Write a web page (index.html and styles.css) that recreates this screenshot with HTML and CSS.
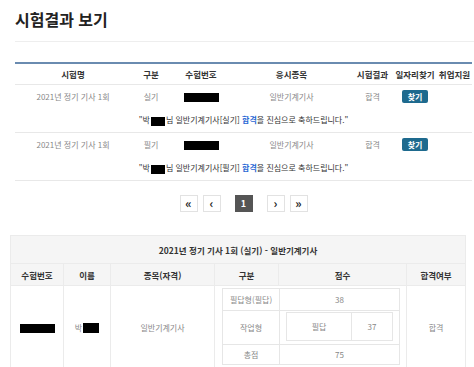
FILE: index.html
```html
<!DOCTYPE html>
<html lang="ko">
<head>
    <meta charset="UTF-8">
    <meta name="viewport" content="width=device-width, initial-scale=1.0">
    <title>시험결과 보기</title>
    <link rel="stylesheet" href="styles.css">
</head>
<body>
    <h1 class="page-title">시험결과 보기</h1>

    <div class="list-wrap">
        <table class="result-list">
            <colgroup>
                <col style="width:116px">
                <col style="width:40px">
                <col style="width:60px">
                <col style="width:121px">
                <col style="width:41px">
                <col style="width:44px">
                <col style="width:35px">
            </colgroup>
            <thead>
                <tr>
                    <th>시험명</th>
                    <th>구분</th>
                    <th>수험번호</th>
                    <th>응시종목</th>
                    <th>시험결과</th>
                    <th>일자리찾기</th>
                    <th>취업지원</th>
                </tr>
            </thead>
            <tbody>
                <tr class="data">
                    <td>2021년 정기 기사 1회</td>
                    <td>실기</td>
                    <td><span class="mask mask-num"></span></td>
                    <td>일반기계기사</td>
                    <td>합격</td>
                    <td><button class="find-btn">찾기</button></td>
                    <td></td>
                </tr>
                <tr class="msg">
                    <td colspan="7">"박<span class="mask mask-name"></span>님 일반기계기사[실기] <b class="pass">합격</b>을 진심으로 축하드립니다."</td>
                </tr>
                <tr class="data">
                    <td>2021년 정기 기사 1회</td>
                    <td>필기</td>
                    <td><span class="mask mask-num"></span></td>
                    <td>일반기계기사</td>
                    <td>합격</td>
                    <td><button class="find-btn">찾기</button></td>
                    <td></td>
                </tr>
                <tr class="msg">
                    <td colspan="7">"박<span class="mask mask-name"></span>님 일반기계기사[필기] <b class="pass">합격</b>을 진심으로 축하드립니다."</td>
                </tr>
            </tbody>
        </table>

        <div class="pagination">
            <a class="page-btn">&laquo;</a>
            <a class="page-btn">&lsaquo;</a>
            <a class="page-btn active">1</a>
            <a class="page-btn">&rsaquo;</a>
            <a class="page-btn">&raquo;</a>
        </div>
    </div>

    <table class="detail">
        <colgroup>
            <col style="width:53px">
            <col style="width:47px">
            <col style="width:104px">
            <col style="width:64px">
            <col style="width:128px">
            <col style="width:59px">
        </colgroup>
        <thead>
            <tr class="detail-title">
                <th colspan="6">2021년 정기 기사 1회 (실기) - 일반기계기사</th>
            </tr>
            <tr class="detail-head">
                <th>수험번호</th>
                <th>이름</th>
                <th>종목(자격)</th>
                <th>구분</th>
                <th>점수</th>
                <th>합격여부</th>
            </tr>
        </thead>
        <tbody>
            <tr>
                <td><span class="mask mask-num"></span></td>
                <td>박<span class="mask mask-name2"></span></td>
                <td>일반기계기사</td>
                <td colspan="2" class="score-cell">
                    <table class="score">
                        <colgroup>
                            <col style="width:57px">
                            <col>
                        </colgroup>
                        <tr class="row-a">
                            <td>필답형(필답)</td>
                            <td>38</td>
                        </tr>
                        <tr class="row-b">
                            <td>작업형</td>
                            <td class="sub-cell">
                                <table class="sub">
                                    <tr>
                                        <td class="sub-name">필답</td>
                                        <td>37</td>
                                    </tr>
                                </table>
                            </td>
                        </tr>
                        <tr class="row-c">
                            <td>총점</td>
                            <td>75</td>
                        </tr>
                    </table>
                </td>
                <td>합격</td>
            </tr>
        </tbody>
    </table>
</body>
</html>
```

FILE: styles.css
```css
body {
    margin: 0;
    font-family: "Noto Sans CJK KR", "Noto Sans", sans-serif;
    color: #333;
    background: #fff;
}
.page-title {
    margin: 0 0 20px 15px;
    padding: 9px 0 11px;
    font-size: 16px;
    line-height: 21px;
    font-weight: bold;
    color: #222;
    border-bottom: 1px solid #eee;
}
.list-wrap {
    margin-left: 15px;
    width: 457px;
}
.result-list {
    width: 457px;
    border-collapse: collapse;
    table-layout: fixed;
    border-top: 2px solid #6a8bb0;
}
.result-list th {
    height: 20px;
    padding: 0;
    font-size: 8.5px;
    font-weight: bold;
    color: #333;
    text-align: center;
    white-space: nowrap;
    border-bottom: 1px solid #e8e8e8;
}
.result-list td {
    height: 23px;
    padding: 0;
    font-size: 8px;
    color: #888;
    text-align: center;
    white-space: nowrap;
}
.result-list .msg td {
    height: 24px;
    color: #333;
    border-bottom: 1px solid #e8e8e8;
}
.pass {
    color: #2a68d4;
}
.mask {
    display: inline-block;
    background: #000;
    vertical-align: middle;
}
.mask-num {
    width: 35px;
    height: 9px;
}
.mask-name {
    width: 14px;
    height: 9px;
    margin: 0 1px;
}
.mask-name2 {
    width: 16px;
    height: 10px;
    margin-left: 1px;
}
.find-btn {
    width: 26px;
    height: 13px;
    padding: 0;
    border: none;
    border-radius: 2px;
    background: #1e6a8e;
    color: #fff;
    font-family: inherit;
    font-size: 8px;
    font-weight: bold;
    line-height: 13px;
}
.pagination {
    display: flex;
    justify-content: center;
    align-items: center;
    margin-top: 14px;
}
.page-btn {
    width: 16px;
    height: 15px;
    border: 1px solid #e2e2e2;
    font-size: 12px;
    font-weight: bold;
    line-height: 13px;
    text-align: center;
    color: #222;
}
.page-btn + .page-btn {
    margin-left: 5px;
}
.page-btn.active {
    margin: 0 14px;
    background: #555;
    border-color: #555;
    color: #fff;
    font-size: 9px;
    line-height: 15px;
}
.page-btn.active + .page-btn {
    margin-left: 0;
}
.detail {
    margin: 23px 0 0 10px;
    width: 455px;
    border-collapse: collapse;
    table-layout: fixed;
}
.detail th,
.detail td {
    padding: 0;
    text-align: center;
    border: 1px solid #ebebeb;
}
.detail th {
    background: #f5f5f5;
    font-size: 8.5px;
    font-weight: bold;
    color: #333;
}
.detail-title th {
    height: 27px;
}
.detail-head th {
    height: 21px;
}
.detail td {
    height: 75px;
    font-size: 8px;
    color: #888;
}
.detail .score-cell {
    padding: 2px 6px 4px 7px;
}
.score {
    width: 100%;
    border-collapse: collapse;
    table-layout: fixed;
}
.score td {
    height: auto;
    border: 1px solid #e6e6e6;
}
.score .row-a td {
    height: 21px;
}
.score .row-b td {
    height: 27px;
}
.score .row-c td {
    height: 19px;
}
.score .sub-cell {
    padding: 1px 6px 3px 6px;
}
.sub {
    width: 100%;
    border-collapse: collapse;
    table-layout: fixed;
}
.sub td {
    height: 20px;
    border: 1px solid #e6e6e6;
}
.sub .sub-name {
    width: 64px;
}
```
